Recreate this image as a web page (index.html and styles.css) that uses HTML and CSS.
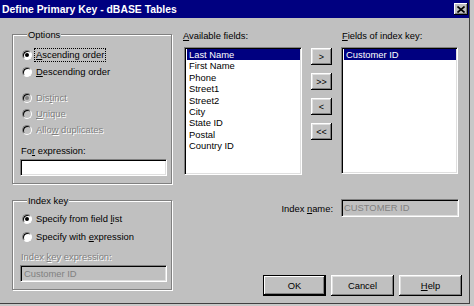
FILE: index.html
```html
<!DOCTYPE html>
<html lang="en">
<head>
  <meta charset="UTF-8" />
  <title>Define Primary Key - dBASE Tables</title>
  <link rel="stylesheet" href="styles.css">
</head>
<body>
  <div class="window">
    <div class="titlebar">
      <span class="title">Define Primary Key - dBASE Tables</span>
      <button class="close">
        <svg width="8" height="7" viewBox="0 0 8 7">
          <path d="M0.5 0.5 L7.5 6.5 M7.5 0.5 L0.5 6.5" stroke="#000" stroke-width="1.6" fill="none"/>
        </svg>
      </button>
    </div>

    <div class="content">
      <div class="left">
        <fieldset class="group options">
          <legend>Options</legend>
          <div class="radio checked"><span class="circle"></span><span class="text focus"><u>A</u>scending order</span></div>
          <div class="radio second"><span class="circle"></span><span class="text"><u>D</u>escending order</span></div>
          <div class="radio disabled checked gap"><span class="circle"></span><span class="text">Dis<u>t</u>inct</span></div>
          <div class="radio disabled"><span class="circle"></span><span class="text"><u>U</u>nique</span></div>
          <div class="radio disabled"><span class="circle"></span><span class="text">Allo<u>w</u> duplicates</span></div>
          <div class="field-label">Fo<u>r</u> expression:</div>
          <div class="edit"></div>
        </fieldset>

        <fieldset class="group index-key">
          <legend>Index key</legend>
          <div class="radio checked"><span class="circle"></span><span class="text">Specify from field <u>l</u>ist</span></div>
          <div class="radio second"><span class="circle"></span><span class="text">Specify with <u>e</u>xpression</span></div>
          <div class="field-label disabled-text">Index <u>k</u>ey expression:</div>
          <div class="edit disabled">Customer ID</div>
        </fieldset>
      </div>

      <div class="right">
        <div class="lists">
          <div class="list-col available">
            <div class="list-label"><u>A</u>vailable fields:</div>
            <ul class="listbox">
              <li class="selected">Last Name</li>
              <li>First Name</li>
              <li>Phone</li>
              <li>Street1</li>
              <li>Street2</li>
              <li>City</li>
              <li>State ID</li>
              <li>Postal</li>
              <li>Country ID</li>
            </ul>
          </div>

          <div class="move-buttons">
            <button class="btn small">&gt;</button>
            <button class="btn small">&gt;&gt;</button>
            <button class="btn small">&lt;</button>
            <button class="btn small">&lt;&lt;</button>
          </div>

          <div class="list-col key-fields">
            <div class="list-label"><u>F</u>ields of index key:</div>
            <ul class="listbox">
              <li class="selected">Customer ID</li>
            </ul>
          </div>
        </div>

        <div class="name-row">
          <span>Index <u>n</u>ame:</span>
          <div class="edit disabled name">CUSTOMER ID</div>
        </div>

        <div class="actions">
          <button class="btn default">OK</button>
          <button class="btn">Cancel</button>
          <button class="btn"><u>H</u>elp</button>
        </div>
      </div>
    </div>
  </div>
</body>
</html>
```

FILE: styles.css
```css
body {
  margin: 0;
  background: #c8c8c8;
  font-family: "Liberation Sans", Arial, sans-serif;
  font-size: 9.4px;
  color: #000;
}

.window {
  width: 469px;
  height: 303px;
  background: #c0c0c0;
  border-right: 1px solid #404040;
  border-bottom: 1px solid #404040;
  display: flex;
  flex-direction: column;
}

u {
  text-decoration-thickness: 1px;
  text-underline-offset: 1px;
}

/* title bar */
.titlebar {
  height: 18px;
  background: #000080;
  color: #fff;
  display: flex;
  align-items: center;
  justify-content: space-between;
  padding-left: 2px;
  padding-right: 1px;
}

.title {
  font-weight: bold;
  font-size: 10.4px;
}

.close {
  width: 14px;
  height: 12px;
  padding: 0;
  border: none;
  background: #c0c0c0;
  display: flex;
  align-items: center;
  justify-content: center;
  box-shadow: inset -1px -1px #000, inset 1px 1px #fff, inset -2px -2px #808080;
}

/* layout */
.content {
  display: flex;
  gap: 11px;
  padding: 10px 0 0 12px;
  flex: 1;
}

.left {
  width: 160px;
  display: flex;
  flex-direction: column;
}

.group {
  margin: 0;
  min-width: 0;
  padding: 0 4px 7px 8px;
  border: 1px solid #808080;
  box-shadow: inset 1px 1px #fff, 1px 1px #fff;
}

.group legend {
  padding: 0 1px;
  margin-left: 6px;
  line-height: 13px;
  background: #c0c0c0;
}

.index-key {
  margin-top: 10px;
}

.radio {
  display: flex;
  align-items: center;
  height: 13px;
  margin-left: 1px;
}

.options .radio:first-of-type {
  margin-top: 7px;
}

.index-key .radio:first-of-type {
  margin-top: 5px;
}

.options .second {
  margin-top: 4px;
}

.index-key .second {
  margin-top: 5px;
}

.options .radio.disabled {
  margin-top: 3px;
}

.options .radio.gap {
  margin-top: 13px;
}

.circle {
  width: 10px;
  height: 10px;
  box-sizing: border-box;
  border-radius: 50%;
  border: 1px solid;
  border-color: #808080 #fff #fff #808080;
  background: #fff;
  box-shadow: inset 1px 1px #000;
  display: flex;
  align-items: center;
  justify-content: center;
  flex-shrink: 0;
}

.radio.checked .circle::after {
  content: "";
  width: 4px;
  height: 4px;
  border-radius: 50%;
  background: #000;
}

.radio .text {
  margin-left: 3px;
  padding: 0 1px;
  line-height: 12px;
}

.text.focus {
  outline: 1px dotted #000;
}

.radio.disabled .circle {
  background: #c0c0c0;
}

.radio.disabled.checked .circle::after {
  background: #808080;
}

.radio.disabled .text,
.disabled-text {
  color: #808080;
  text-shadow: 1px 1px 0 #fff;
}

.field-label {
  line-height: 13px;
  margin-top: 8px;
}

.index-key .field-label {
  margin-top: 7px;
}

.edit {
  height: 17px;
  box-sizing: border-box;
  margin-top: 2px;
  margin-left: -1px;
  border: 1px solid;
  border-color: #808080 #fff #fff #808080;
  box-shadow: inset 1px 1px #000, inset -1px -1px #dfdfdf;
  background: #fff;
  padding: 0 3px;
  line-height: 15px;
}

.edit.disabled {
  background: #c0c0c0;
  color: #808080;
}

/* right side */
.right {
  width: 279px;
  display: flex;
  flex-direction: column;
  padding-top: 1px;
}

.lists {
  display: flex;
  gap: 9px;
}

.list-col {
  display: flex;
  flex-direction: column;
}

.available {
  width: 119px;
}

.key-fields {
  width: 117px;
}

.list-label {
  line-height: 13px;
  margin-bottom: 5px;
}

.key-fields .list-label {
  margin-left: 1px;
}

.listbox {
  list-style: none;
  margin: 0;
  padding: 1px 1px;
  height: 127px;
  box-sizing: border-box;
  border: 1px solid;
  border-color: #808080 #fff #fff #808080;
  box-shadow: inset 1px 1px #000, inset -1px -1px #dfdfdf;
  background: #fff;
}

.available .listbox {
  margin-left: 1px;
  height: 128px;
}

.listbox li {
  line-height: 11.4px;
  padding-left: 2px;
  margin-left: 1px;
}

.listbox li.selected {
  background: #000080;
  color: #fff;
}

.move-buttons {
  display: flex;
  flex-direction: column;
  gap: 8px;
  padding-top: 19px;
}

.btn {
  font-family: inherit;
  font-size: inherit;
  color: #000;
  background: #c0c0c0;
  border: none;
  padding: 0;
  width: 63px;
  height: 21px;
  box-shadow: inset -1px -1px #000, inset 1px 1px #fff, inset -2px -2px #808080, inset 2px 2px #dfdfdf;
}

.btn.small {
  width: 21px;
  height: 17px;
  font-size: 9px;
}

.btn.default {
  border: 1px solid #000;
  box-shadow: inset -1px -1px #000, inset 1px 1px #fff, inset -2px -2px #808080;
}

.name-row {
  display: flex;
  align-items: center;
  justify-content: flex-end;
  gap: 8px;
  margin-top: 24px;
  padding-right: 3px;
}

.edit.name {
  width: 118px;
  height: 18px;
  margin: 0;
  line-height: 16px;
  padding-left: 2px;
}

.actions {
  display: flex;
  justify-content: flex-end;
  gap: 5px;
  margin-top: 58px;
}
```
